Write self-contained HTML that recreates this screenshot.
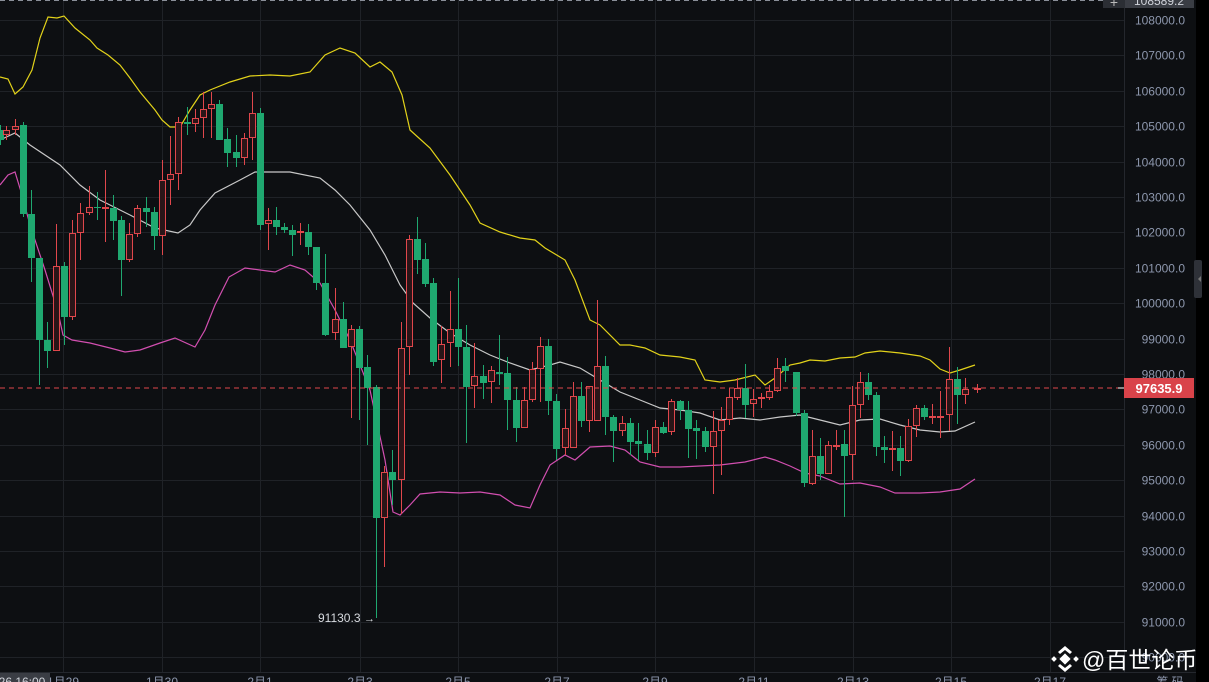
<!DOCTYPE html>
<html><head><meta charset="utf-8">
<style>
html,body{margin:0;padding:0;background:#0d0f12;width:1209px;height:682px;overflow:hidden;font-family:"Liberation Sans","Noto Sans CJK SC",sans-serif;}
#c{position:absolute;left:0;top:0;}
</style></head><body>
<svg id="c" width="1209" height="682" viewBox="0 0 1209 682" xmlns="http://www.w3.org/2000/svg">
<rect width="1209" height="682" fill="#0d0f12"/>
<g id="grid" stroke="#1f2227" stroke-width="1"></g>
<line x1="0" y1="0.5" x2="1124" y2="0.5" stroke="#8a8f99" stroke-dasharray="5,4"/>
<line x1="1124.5" y1="0" x2="1124.5" y2="672" stroke="#24272d"/>
<line x1="0" y1="672.5" x2="1196" y2="672.5" stroke="#24272d"/>
<g id="bands" fill="none" stroke-width="1.2"></g>
<g id="candles"></g>
<line x1="0" y1="388" x2="1124" y2="388" stroke="#e0474c" stroke-dasharray="5,4" stroke-width="1"/>
<g id="ylab" fill="#8d97ad" font-size="12" text-anchor="end"></g>
<rect x="1124" y="378" width="70" height="20" fill="#d9434a"/>
<line x1="1118" y1="388" x2="1124" y2="388" stroke="#fff"/>
<text x="1159" y="393" fill="#fff" font-size="13" font-weight="bold" text-anchor="middle">97635.9</text>
<rect x="1103" y="0" width="22" height="8" fill="#2b2e34"/>
<text x="1114" y="7" fill="#bbb" font-size="14" text-anchor="middle">+</text>
<rect x="1125" y="0" width="69" height="8" fill="#3a3d44"/>
<text x="1159" y="5" fill="#d0d3da" font-size="12" text-anchor="middle">108589.2</text>
<rect x="1196" y="0" width="13" height="682" fill="#000"/>
<rect x="1194" y="260" width="8" height="38" rx="2" fill="#2e3138"/>
<path d="M1198 279 L1201 276 L1201 282 Z" fill="#777"/>
<text x="318" y="622" fill="#d8dbe0" font-size="12">91130.3</text>
<text x="364" y="622" fill="#d8dbe0" font-size="11">→</text>
<g id="xlab" fill="#8d97ad" font-size="12" text-anchor="middle"></g>
<rect x="0" y="673" width="50" height="9" fill="#3a3d44"/>
<text x="22" y="686" fill="#d0d3da" font-size="12" text-anchor="middle">26 16:00</text>
<text x="1170" y="686" fill="#8d97ad" font-size="12" text-anchor="middle">筹 码</text>
<g fill="#fff" transform="translate(1065,659)">
<rect x="-4" y="-4" width="8" height="8" transform="rotate(45)"/>
<rect x="-13" y="-2" width="4" height="4" transform="rotate(45 -11 0)"/>
<rect x="9" y="-2" width="4" height="4" transform="rotate(45 11 0)"/>
<path d="M-7 -7 L0 -13 L7 -7 L5 -5 L0 -9 L-5 -5 Z"/>
<path d="M-7 7 L0 13 L7 7 L5 5 L0 9 L-5 5 Z"/>
</g>
<text x="1082" y="668" fill="#fff" font-size="23" font-family="'Liberation Sans','Noto Sans CJK SC',sans-serif">@百世论币</text>
</svg>
<script>
var NS="http://www.w3.org/2000/svg";
function el(p,t,a){var e=document.createElementNS(NS,t);for(var k in a)e.setAttribute(k,a[k]);p.appendChild(e);return e;}
function Y(p){return 20+(108000-p)*0.0354;}
var g=document.getElementById('grid'),yl=document.getElementById('ylab'),xl=document.getElementById('xlab');
for(var p=108000;p>=90000;p-=1000){var y=Math.round(Y(p))+0.5;el(g,'line',{x1:0,y1:y,x2:1124,y2:y});
 var t=el(yl,'text',{x:1185,y:y+4});t.textContent=p.toFixed(1);}
var xs=[63,162,260,360,458,557,655,754,853,951,1050],lb=['1月29','1月30','2月1','2月3','2月5','2月7','2月9','2月11','2月13','2月15','2月17'];
xs.forEach(function(x,i){el(g,'line',{x1:x+0.5,y1:0,x2:x+0.5,y2:672});var t=el(xl,'text',{x:x,y:686});t.textContent=lb[i];});
var b=document.getElementById('bands');
function pl(pts,c){el(b,'polyline',{points:pts,stroke:c});}
pl("0,77 8,79 15,94 23,87 32,70 40,38 48,17 57,18 64,16 75,28 90,40 97,48 108,55 120,65 130,78 140,92 155,110 162,120 170,127 180,127 190,110 200,95 210,90 230,82 250,76 270,75 290,76 310,72 325,55 340,48 355,53 370,67 380,62 392,72 402,95 410,130 430,148 450,175 470,205 480,223 500,232 520,238 535,240 545,248 565,260 575,280 590,320 600,325 620,345 630,345 645,348 660,355 680,357 695,360 705,380 720,382 735,380 755,375 765,385 775,378 790,365 800,363 810,360 825,361 840,358 855,357 865,353 880,351 900,353 920,356 930,360 940,369 950,373 960,370 975,365","#e2d21a");
pl("0,140 15,133 30,145 60,165 80,185 100,200 130,215 155,228 178,233 190,225 200,210 215,193 240,180 255,172 270,172 290,172 320,178 335,190 350,205 370,230 385,255 400,285 413,303 430,318 450,333 470,345 490,355 510,363 530,370 550,365 560,362 580,368 600,380 620,392 640,400 660,408 680,410 700,413 720,420 740,418 760,420 780,417 800,415 820,420 840,425 860,420 880,419 900,425 920,430 940,432 955,431 975,422","#c8c8c8");
pl("0,185 8,175 15,172 22,195 30,225 45,270 58,312 63,335 72,340 90,343 110,348 125,352 140,350 160,343 175,338 195,347 205,330 215,305 229,277 245,268 260,270 275,272 290,265 305,270 320,283 335,310 350,340 370,390 385,460 393,512 400,515 410,505 420,494 440,492 460,493 480,492 500,495 515,505 530,508 540,485 550,465 556,461 565,455 575,460 590,447 610,446 625,450 640,462 660,467 680,467 700,466 720,465 745,462 765,457 775,460 790,466 805,473 820,476 840,484 860,483 880,487 895,493 920,493 940,492 960,489 975,479","#d24fb0");
// x, open, close, high, low (pixel y)
var D=[[0,130,140,125,145],[6,135,130,126,140],[15,130,126,119,135],[23,125,214,122,217],[31,214,258,190,282],[39,258,340,258,385],[47,340,351,322,368],[56,351,266,224,351],[64,266,317,262,345],[72,317,233,220,320],[80,233,213,203,260],[89,213,207,186,215],[97,207,208,192,220],[105,208,207,170,242],[113,208,221,195,240],[121,220,260,216,296],[129,260,234,223,262],[137,234,208,205,237],[146,208,212,197,227],[154,212,236,207,250],[162,236,180,160,255],[170,180,174,136,205],[178,174,122,117,190],[187,122,124,107,135],[195,124,118,109,132],[203,118,109,92,138],[211,109,104,92,138],[219,104,140,100,140],[227,139,153,128,167],[236,152,158,135,167],[244,158,138,133,165],[252,138,113,92,160],[260,113,225,108,230],[268,224,220,208,250],[276,220,227,207,235],[284,227,230,223,233],[292,230,235,225,256],[300,233,231,223,245],[308,232,247,224,255],[316,247,283,247,290],[325,283,335,254,336],[335,333,319,288,340],[343,319,348,302,348],[351,347,329,325,418],[359,329,368,326,420],[367,367,388,355,445],[376,387,518,385,618],[384,518,472,466,567],[392,472,480,450,505],[401,480,348,322,514],[409,347,239,235,375],[417,239,260,217,274],[425,259,284,243,287],[433,283,362,278,366],[441,360,344,326,383],[450,343,329,291,367],[458,329,347,278,366],[466,347,387,325,443],[474,386,376,343,408],[483,376,383,365,399],[491,382,370,366,403],[499,372,374,335,385],[507,373,400,357,430],[516,400,428,387,442],[524,428,400,387,428],[532,400,369,362,402],[540,369,346,337,402],[548,346,401,339,415],[556,401,449,394,460],[565,448,428,409,455],[573,448,396,382,441],[581,396,421,382,427],[589,421,386,386,432],[597,421,366,300,405],[605,366,417,356,435],[613,417,431,415,462],[622,431,423,416,436],[630,423,442,418,455],[638,441,444,423,460],[647,444,453,430,460],[655,453,427,420,457],[663,427,433,422,434],[671,432,401,399,435],[680,401,410,400,420],[688,410,429,401,458],[696,428,431,420,459],[705,431,447,427,452],[713,447,431,411,494],[721,431,420,407,475],[729,420,397,388,425],[737,398,388,378,400],[745,388,405,364,418],[753,404,399,389,417],[761,398,397,393,408],[769,398,391,385,400],[777,391,368,358,392],[785,366,371,358,382],[796,372,413,372,416],[804,413,483,410,487],[812,484,456,430,485],[820,456,474,438,480],[828,474,445,441,474],[836,446,445,430,450],[844,444,456,430,517],[852,455,405,386,480],[860,405,382,372,418],[868,382,395,373,400],[876,395,447,392,456],[884,447,450,436,463],[892,450,448,431,471],[900,448,461,436,476],[908,461,426,419,462],[916,426,408,405,437],[924,408,417,405,420],[932,417,416,404,424],[940,417,416,391,438],[949,415,379,347,431],[957,379,395,367,424],[965,395,389,378,404],[977,389,388,384,393]];
var cg=document.getElementById('candles');
D.forEach(function(d){var x=d[0],o=d[1],c=d[2],up=c<o,col=up?'#e0474c':'#1fa870';
 var t=Math.min(o,c),bt=Math.max(o,c),h=Math.max(bt-t,1);
 if(up){el(cg,'line',{x1:x+0.5,y1:d[3],x2:x+0.5,y2:t,stroke:col});el(cg,'line',{x1:x+0.5,y1:bt,x2:x+0.5,y2:d[4],stroke:col});
  el(cg,'rect',{x:x-2.5,y:t+0.5,width:6,height:Math.max(h-1,1),fill:'#2a1518',stroke:col,'stroke-width':1});}
 else{el(cg,'line',{x1:x+0.5,y1:d[3],x2:x+0.5,y2:d[4],stroke:col});el(cg,'rect',{x:x-3,y:t,width:7,height:h,fill:col});}
});
</script>
</body></html>
